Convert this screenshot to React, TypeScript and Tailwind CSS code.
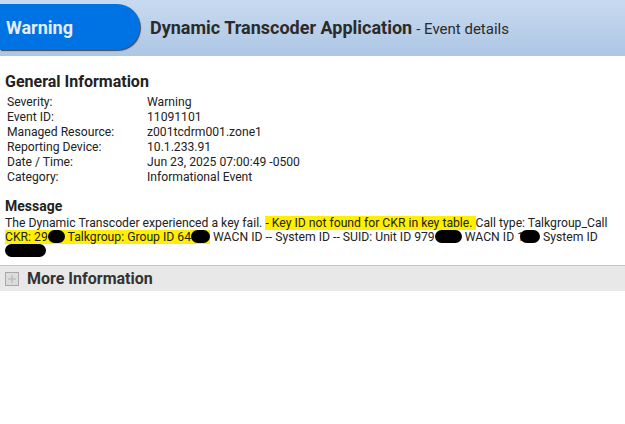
import React from "react"

const rows: [string, string][] = [
    ["Severity:", "Warning"],
    ["Event ID:", "11091101"],
    ["Managed Resource:", "z001tcdrm001.zone1"],
    ["Reporting Device:", "10.1.233.91"],
    ["Date / Time:", "Jun 23, 2025 07:00:49 -0500"],
    ["Category:", "Informational Event"],
]

// black redaction blob
const Blot = ({ w, ml = 0 }: { w: number; ml?: number }) => (
    <span
        className="inline-block h-[13px] rounded-full bg-black align-[-2px]"
        style={{ width: w, marginLeft: ml }}
    />
)

export default function App() {
    return (
        <div className="w-[625px] h-[424px] bg-white text-[#222] overflow-hidden" style={{ fontFamily: "Roboto, 'Liberation Sans', sans-serif" }}>
            {/* header */}
            <div className="h-[56px] flex items-center bg-gradient-to-b from-[#c8daf0] to-[#adc6e4]">
                <div className="h-[46px] w-[140px] rounded-r-[23px] bg-[#0073e4] shadow-[1px_1px_1px_rgba(40,40,60,0.8)] flex items-center pl-[6px] -mt-[2px]">
                    <span className="text-[18px] font-bold text-[#e6edf5]">Warning</span>
                </div>
                <div className="ml-[10px] flex items-baseline -mt-[2px]">
                    <span className="text-[18px] font-bold text-[#2b2b2b]">Dynamic Transcoder Application</span>
                    <span className="ml-[4px] text-[15px] text-[#2b2b2b]">- Event details</span>
                </div>
            </div>

            {/* general info */}
            <div className="px-[5px] pt-[16px]">
                <h2 className="text-[16px] font-bold leading-[20px] text-[#222]">General Information</h2>
                <div className="mt-[3px] pl-[2px] text-[12.15px] leading-[15px]">
                    {rows.map(([k, v]) => (
                        <div key={k} className="flex">
                            <div className="w-[140px]">{k}</div>
                            <div>{v}</div>
                        </div>
                    ))}
                </div>

                <h3 className="mt-[13px] text-[14px] font-bold leading-[17px]">Message</h3>
                <div className="mt-[2px] text-[12.2px] leading-[13px] whitespace-nowrap">
                    <div>
                        The Dynamic Transcoder experienced a key fail.{" "}
                        <span className="bg-[#fff000]">- Key ID not found for CKR in key table. </span>
                        Call type: Talkgroup_Call
                    </div>
                    <div>
                        <span className="bg-[#fff000]">
                            CKR: 29<Blot w={17} /> Talkgroup: Group ID 64<Blot w={19} />
                        </span>{" "}
                        WACN ID -- System ID -- SUID: Unit ID 979<Blot w={27} /> WACN ID 1<Blot w={20} ml={-4} /> System ID
                    </div>
                    <div>
                        <Blot w={41} />
                    </div>
                </div>
            </div>

            {/* more info */}
            <div className="mt-[7px] border-t border-[#c4c4c4] bg-[#e8e8e8] h-[26px] flex items-center pl-[5px]">
                <div className="w-[14px] h-[14px] border border-[#a8a8a8] bg-[#dcdcdc] flex items-center justify-center">
                    <svg width="10" height="10" viewBox="0 0 10 10">
                        <path d="M5 1v8M1 5h8" stroke="#b0b0b0" strokeWidth="1" />
                    </svg>
                </div>
                <span className="ml-[8px] text-[16px] font-bold text-[#333]">More Information</span>
            </div>
        </div>
    )
}
